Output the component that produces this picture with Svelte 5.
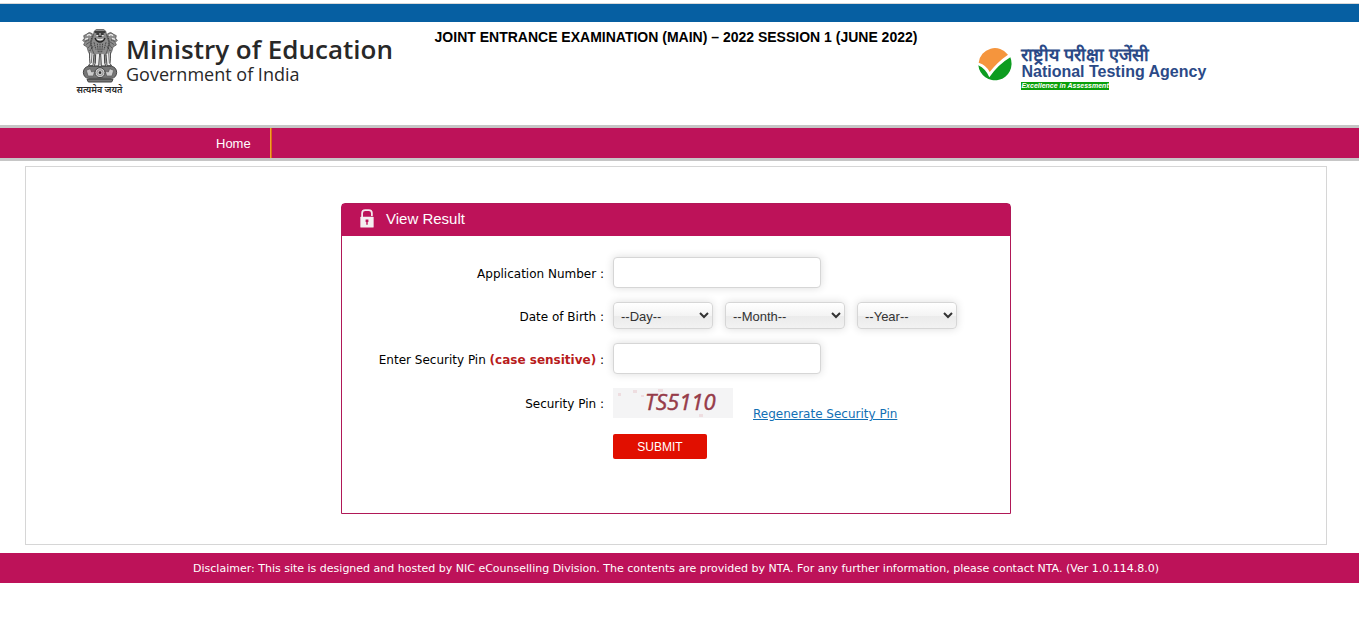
<script lang="ts">
	const months = ['January', 'February', 'March', 'April', 'May', 'June', 'July', 'August', 'September', 'October', 'November', 'December']
	const days = Array.from({ length: 31 }, (_, i) => i + 1)
	const years = Array.from({ length: 40 }, (_, i) => 2010 - i)

	let applicationNumber = ''
	let day = ''
	let month = ''
	let year = ''
	let pin = ''
</script>

<div class="top-bar"></div>

<header>
	<div class="ministry">
		<div class="emblem">
			<svg viewBox="0 0 106 162" width="36" height="54" aria-hidden="true">
				<g fill="#8c8c8c" stroke="#444" stroke-width="2">
					<path d="M12 16Q20 6 30 14L40 24V80H24Q16 66 14 54L4 48L7 40L1 34L6 28L4 20Z" />
					<path d="M94 16Q86 6 76 14L66 24V80H82Q90 66 92 54L102 48L99 40L105 34L100 28L102 20Z" />
					<path d="M36 6L43 1H63L70 6L75 26L82 46L76 62L68 82H38L30 62L24 46L31 26Z" />
				</g>
				<path d="M37 9h32M42 15h8m6 0h8M48 22h10M38 27q5 12 15 12t15-12" fill="none" stroke="#222" stroke-width="4" />
				<path d="M42 20h5m12 0h5M43 30q10 5 20 0" fill="none" stroke="#f2f2f2" stroke-width="3" />
				<path d="M14 20q7-6 12 0M92 20q-7-6-12 0M8 31l9-3M98 31l-9-3" fill="none" stroke="#eee" stroke-width="4" />
				<path d="M9 37l12-5M12 46l12-8M18 56l10-12M22 66l10-14M97 37l-12-5M94 46l-12-8M88 56L78 44M84 66L74 52M35 40l6 22m4-18l3 26m13-26l-3 26m13-30l-6 22M53 44v30M30 20l-5 18 5 20M76 20l5 18-5 20" fill="none" stroke="#444" stroke-width="3" stroke-dasharray="5 2" />
				<path d="M22 70q-1 18 1 34l-5 6h14l3-34M40 76l-1 27-4 8h14l3-36M55 75l2 36h14l-4-8-1-27M71 76l3 34h14l-5-6q2-16 1-34" fill="#eee" stroke="#444" stroke-width="3" />
				<path d="M29 72l-2 30m9-30v32m17-26v30m17-36v32m9-32l2 30" stroke="#777" stroke-width="3" />
				<path d="M18 112q-14 3-15 18 1 16 15 18h70q14-2 15-18-1-15-15-18Z" fill="#777" stroke="#444" stroke-width="3" />
				<path d="M12 124l12-5 4 10 9-3-4 15H17ZM94 124l-12-5-4 10-9-3 4 15h16Z" fill="#ccc" stroke="#555" stroke-width="2" />
				<circle cx="53" cy="131" r="15" fill="#ccc" stroke="#444" stroke-width="3" />
				<circle cx="53" cy="131" r="9" fill="none" stroke="#777" stroke-width="2" />
				<circle cx="53" cy="131" r="4" fill="#333" />
				<path d="M14 151h78l-4 8H18Z" fill="#777" stroke="#444" stroke-width="3" />
			</svg>
			<span>सत्यमेव जयते</span>
		</div>
		<div class="ministry-name">
			<strong>Ministry of Education</strong>
			<span>Government of India</span>
		</div>
	</div>
	<h1>JOINT ENTRANCE EXAMINATION (MAIN) – 2022 SESSION 1 (JUNE 2022)</h1>
	<div class="agency">
		<svg viewBox="0 0 102 102" width="34" height="34" aria-hidden="true">
			<path d="M2 44A49 49 0 0 1 90 20Q58 42 35 72Q26 52 2 44Z" fill="#f5953d" />
			<path d="M1 52Q23 62 34 88Q60 50 97 28A50 50 0 1 1 1 52Z" fill="#0d9c20" />
		</svg>
		<div class="agency-name">
			<span class="hindi">राष्ट्रीय परीक्षा एजेंसी</span>
			<strong>National Testing Agency</strong>
			<em>Excellence in Assessment</em>
		</div>
	</div>
</header>

<nav>
	<a href="#home">Home</a>
</nav>

<main>
	<section class="panel">
		<h2>
			<svg viewBox="0 0 40 54" width="14" height="19" aria-hidden="true">
				<path d="M6 25V12Q6 3 15 3h10q9 0 9 9v8" fill="none" stroke="#f4e8ed" stroke-width="5" />
				<rect x="1" y="22" width="38" height="31" rx="2" fill="#f4eff1" />
				<path d="M16 30h8v7h-2v8h-4v-8h-2Z" fill="#bd1259" />
			</svg>
			View Result
		</h2>
		<form on:submit|preventDefault>
			<label for="application">Application Number :</label>
			<input id="application" type="text" bind:value={applicationNumber} />

			<label for="day">Date of Birth :</label>
			<div class="dates">
				<select id="day" bind:value={day}>
					<option value="">--Day--</option>
					{#each days as d}
						<option value={String(d)}>{d}</option>
					{/each}
				</select>
				<select class="month" aria-label="Month" bind:value={month}>
					<option value="">--Month--</option>
					{#each months as m}
						<option value={m}>{m}</option>
					{/each}
				</select>
				<select aria-label="Year" bind:value={year}>
					<option value="">--Year--</option>
					{#each years as y}
						<option value={String(y)}>{y}</option>
					{/each}
				</select>
			</div>

			<label for="pin">Enter Security Pin <b>(case sensitive)</b> :</label>
			<input id="pin" type="text" bind:value={pin} />

			<span class="label">Security Pin :</span>
			<div class="captcha">
				<svg viewBox="0 0 120 30" width="120" height="30">
					<rect width="120" height="30" fill="#f4f4f5" />
					<g fill="#eedde0">
						<rect x="5" y="5" width="3" height="3" />
						<rect x="20" y="2" width="4" height="3" />
						<rect x="28" y="7" width="3" height="2" />
						<rect x="45" y="1" width="5" height="3" />
						<rect x="86" y="26" width="4" height="3" />
					</g>
					<text x="32" y="22">TS5110</text>
				</svg>
				<a href="#regenerate">Regenerate Security Pin</a>
			</div>

			<button type="submit">SUBMIT</button>
		</form>
	</section>
</main>

<footer>
	Disclaimer: This site is designed and hosted by NIC eCounselling Division. The contents are provided by NTA. For any further information, please contact NTA. (Ver 1.0.114.8.0)
</footer>

<style>
	:global(body) {
		background: #fff;
		color: #000;
		font-family: Verdana, 'DejaVu Sans', sans-serif;
		font-size: 12px;
	}

	.top-bar {
		height: 18px;
		margin-top: 3px;
		border-top: 1px solid #d8d8d8;
		background: #065fa2;
	}

	header {
		display: grid;
		grid-template-columns: 1fr auto 1fr;
		box-sizing: border-box;
		min-height: 103px;
		padding: 7px 7px 0 0;
	}

	.ministry {
		display: flex;
		align-items: flex-start;
		gap: 4px;
		padding-left: 77px;
		color: #282828;
		white-space: nowrap;
	}

	.emblem {
		display: flex;
		flex-direction: column;
		align-items: center;
		width: 45px;
	}

	.emblem span {
		font: 9px/14px 'Noto Sans', sans-serif;
		font-weight: 600;
	}

	.ministry-name {
		display: flex;
		flex-direction: column;
		font-family: 'Open Sans', 'Noto Sans', sans-serif;
		padding-top: 4px;
	}

	.ministry-name strong {
		font-size: 26px;
		font-weight: 600;
		line-height: 32px;
	}

	.ministry-name span {
		font-size: 18px;
		line-height: 18px;
	}

	h1 {
		margin: 0;
		font: bold 14px/16px 'Liberation Sans', Arial, sans-serif;
	}

	.agency {
		display: flex;
		align-items: flex-start;
		gap: 9px;
		padding: 19px 0 0 61px;
		white-space: nowrap;
	}

	.agency-name {
		display: flex;
		flex-direction: column;
		align-items: flex-start;
		color: #2b4a87;
		font-family: 'Liberation Sans', Arial, sans-serif;
	}

	.agency-name .hindi {
		font-size: 18px;
		font-weight: 600;
		line-height: 14px;
	}

	.agency-name strong {
		font-size: 16px;
		line-height: 20px;
	}

	.agency-name em {
		background: #0a9f0a;
		color: #fff;
		font-size: 7px;
		font-weight: bold;
		line-height: 8px;
	}

	nav {
		display: flex;
		padding-left: 196px;
		border: solid #c6c6c6;
		border-width: 3px 0;
		background: #bd1259;
	}

	nav a {
		padding: 1px 19px 0 20px;
		border-right: 1px solid #f0a030;
		box-shadow: 1px 0 #d86a10;
		color: #fff;
		font: 13px/29px 'Liberation Sans', Arial, sans-serif;
		text-decoration: none;
	}

	main {
		margin: 5px 32px 8px 25px;
		padding: 36px 0 30px;
		border: 1px solid #d6d6d6;
	}

	.panel {
		box-sizing: border-box;
		width: 670px;
		max-width: 100%;
		margin: 0 auto;
		border: 1px solid #b01857;
		border-radius: 4px 4px 0 0;
	}

	h2 {
		display: flex;
		align-items: center;
		gap: 12px;
		height: 32px;
		margin: 0;
		padding: 0 18px 3px;
		box-sizing: border-box;
		background: #bd1259;
		color: #fff;
		font: 15px/28px 'Liberation Sans', Arial, sans-serif;
	}

	form {
		display: grid;
		grid-template-columns: 262px 1fr;
		gap: 14px 9px;
		align-items: center;
		padding: 21px 0 54px;
	}

	label,
	.label {
		padding-top: 2px;
		text-align: right;
		line-height: 16px;
	}

	label b {
		color: #b81c1c;
	}

	input,
	select {
		box-sizing: border-box;
		border: 1px solid #d6d6d6;
		border-radius: 4px;
		box-shadow: 0 0 8px rgba(0, 0, 0, 0.14);
		font: 13px 'Liberation Sans', Arial, sans-serif;
		color: #333;
	}

	input {
		width: 208px;
		height: 31px;
		padding: 0 8px;
		background: #fff;
	}

	.dates {
		display: flex;
		gap: 12px;
	}

	select {
		width: 100px;
		height: 27px;
		padding: 2px 3px 0;
		background: linear-gradient(#fff, #f4f4f4 50%, #ebebeb 51%, #f2f2f2);
	}

	select.month {
		width: 120px;
	}

	.captcha {
		display: flex;
		align-items: flex-end;
		gap: 20px;
		height: 30px;
	}

	.captcha svg {
		overflow: visible;
	}

	.captcha text {
		fill: #963b49;
		stroke: #963b49;
		stroke-width: 0.5px;
		font: italic 22px 'Open Sans', sans-serif;
	}

	.captcha a {
		color: #136fb4;
		line-height: 8px;
	}

	button {
		grid-column: 2;
		justify-self: start;
		width: 94px;
		height: 25px;
		margin-top: 2px;
		padding: 0;
		border: 0;
		border-radius: 2px;
		background: #e10f00;
		color: #fff;
		font: 12px 'Liberation Sans', Arial, sans-serif;
	}

	footer {
		padding: 1px 7px 0 0;
		background: #bd1259;
		color: #fff;
		font-size: 11px;
		line-height: 29px;
		text-align: center;
	}
</style>
